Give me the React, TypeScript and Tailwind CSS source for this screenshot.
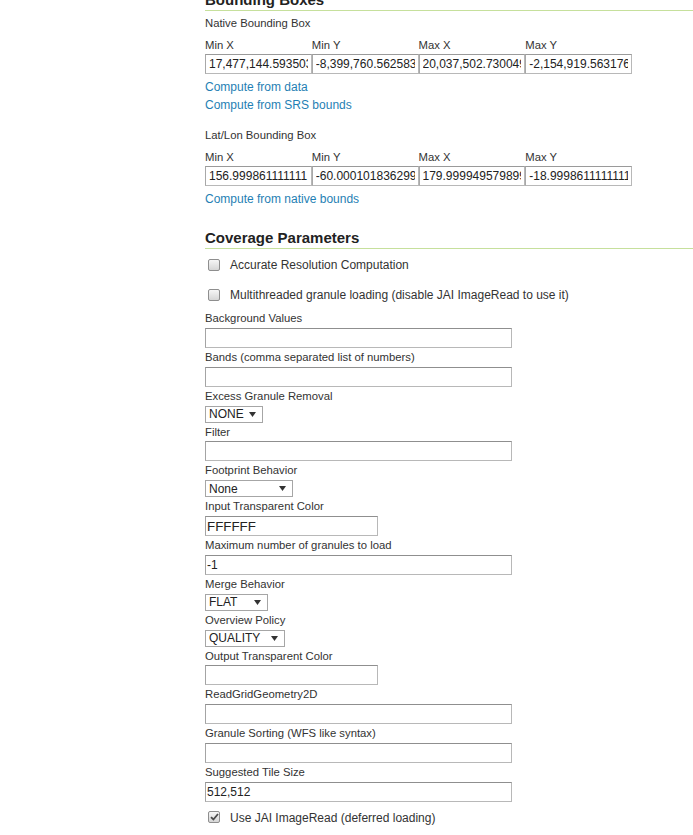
import React from "react";

const Label = ({ children, extra = "" }: { children: React.ReactNode; extra?: string }) => (
  <div className={`text-[11.3px] leading-[14.85px] mt-[2px] mb-[2px] text-[#333] ${extra}`}>{children}</div>
);

const TextInput = ({ value = "", w = "w-[307px]", size = "text-[12px]" }: { value?: string; w?: string; size?: string }) => (
  <input
    readOnly
    value={value}
    className={`block h-[20px] ${w} ${size} border border-[#b8b8b8] border-t-[#8f8f8f] border-l-[#a4a4a4] bg-white px-[1px] text-[#222] outline-none`}
  />
);

const Select = ({ value, w }: { value: string; w: string }) => (
  <div className={`flex h-[17px] ${w} items-center justify-between border border-[#a6a6a6] bg-white pl-[3px] pr-[6px] text-[12px] leading-none text-[#222]`}>
    <span>{value}</span>
    <svg width="7" height="5" viewBox="0 0 7 5">
      <polygon points="0,0 7,0 3.5,5" fill="#333" />
    </svg>
  </div>
);

const Checkbox = ({ checked = false, label, extra = "" }: { checked?: boolean; label: string; extra?: string }) => (
  <div className={`flex h-[18px] items-center ${extra}`}>
    <div className="ml-[3px] mt-[-1px] flex h-[12px] w-[12px] items-center justify-center rounded-[2px] border border-[#8e8e8e] bg-linear-to-b from-[#f6f6f6] to-[#d6d6d6]">
      {checked && (
        <svg width="9" height="8" viewBox="0 0 9 8">
          <path d="M1 4.2 L3.4 6.5 L8 1" stroke="#4a4a4a" strokeWidth="1.8" fill="none" />
        </svg>
      )}
    </div>
    <span className="ml-[10px] text-[12px] text-[#333]">{label}</span>
  </div>
);

const BBox = ({ title, values, links, titleMt }: { title: string; values: string[]; links: string[]; titleMt: string }) => (
  <div className="flex flex-col">
    <div className={`text-[11.3px] leading-[14px] text-[#333] ${titleMt}`}>{title}</div>
    <div className="mt-[8px] grid w-[427px] grid-cols-4">
      {["Min X", "Min Y", "Max X", "Max Y"].map((l) => (
        <div key={l} className="text-[11.3px] leading-[14px] text-[#333]">{l}</div>
      ))}
    </div>
    <div className="mt-[2px] grid w-[427px] grid-cols-4">
      {values.map((v, i) => (
        <input
          key={i}
          readOnly
          value={v}
          className="block h-[20px] w-full border border-[#b8b8b8] border-t-[#9a9a9a] border-l-[#a8a8a8] bg-white px-[3px] text-[12px] text-[#222] outline-none"
        />
      ))}
    </div>
    <div className="mt-[4px] flex flex-col">
      {links.map((l) => (
        <span key={l} className="text-[12px] leading-[18px] text-[#1f7fb4]">{l}</span>
      ))}
    </div>
  </div>
);

export default function App() {
  return (
    <div className="h-[835px] w-[693px] overflow-hidden bg-white pl-[205px] font-['Liberation_Sans',Arial,sans-serif]">
      <div className="flex flex-col">
        <h2 className="mt-[-9px] border-b border-[#c6e09c] pb-[1px] text-[15px] font-bold leading-[18px] text-[#222]">
          Bounding Boxes
        </h2>
        <BBox
          title="Native Bounding Box"
          titleMt="mt-[5px]"
          values={["17,477,144.593503", "-8,399,760.562583", "20,037,502.730049", "-2,154,919.563176"]}
          links={["Compute from data", "Compute from SRS bounds"]}
        />
        <BBox
          title="Lat/Lon Bounding Box"
          titleMt="mt-[14px]"
          values={["156.999861111111", "-60.000101836299", "179.999949579899", "-18.9998611111111"]}
          links={["Compute from native bounds"]}
        />
        <h2 className="mt-[21px] border-b border-[#c6e09c] pb-[1px] text-[15px] font-bold leading-[18px] text-[#222]">
          Coverage Parameters
        </h2>
        <Checkbox label="Accurate Resolution Computation" extra="mt-[7px]" />
        <Checkbox label="Multithreaded granule loading (disable JAI ImageRead to use it)" extra="mt-[12px]" />

        <Label extra="mt-[7px]">Background Values</Label>
        <TextInput />
        <Label>Bands (comma separated list of numbers)</Label>
        <TextInput />
        <Label>Excess Granule Removal</Label>
        <Select value="NONE" w="w-[58px]" />
        <Label>Filter</Label>
        <TextInput />
        <Label>Footprint Behavior</Label>
        <Select value="None" w="w-[88px]" />
        <Label>Input Transparent Color</Label>
        <TextInput value="FFFFFF" w="w-[173px]" size="text-[13.33px]" />
        <Label>Maximum number of granules to load</Label>
        <TextInput value="-1" />
        <Label>Merge Behavior</Label>
        <Select value="FLAT" w="w-[63px]" />
        <Label>Overview Policy</Label>
        <Select value="QUALITY" w="w-[80px]" />
        <Label>Output Transparent Color</Label>
        <TextInput w="w-[173px]" />
        <Label>ReadGridGeometry2D</Label>
        <TextInput />
        <Label>Granule Sorting (WFS like syntax)</Label>
        <TextInput />
        <Label>Suggested Tile Size</Label>
        <TextInput value="512,512" />
        <Checkbox checked label="Use JAI ImageRead (deferred loading)" extra="mt-[7px]" />
      </div>
    </div>
  );
}
